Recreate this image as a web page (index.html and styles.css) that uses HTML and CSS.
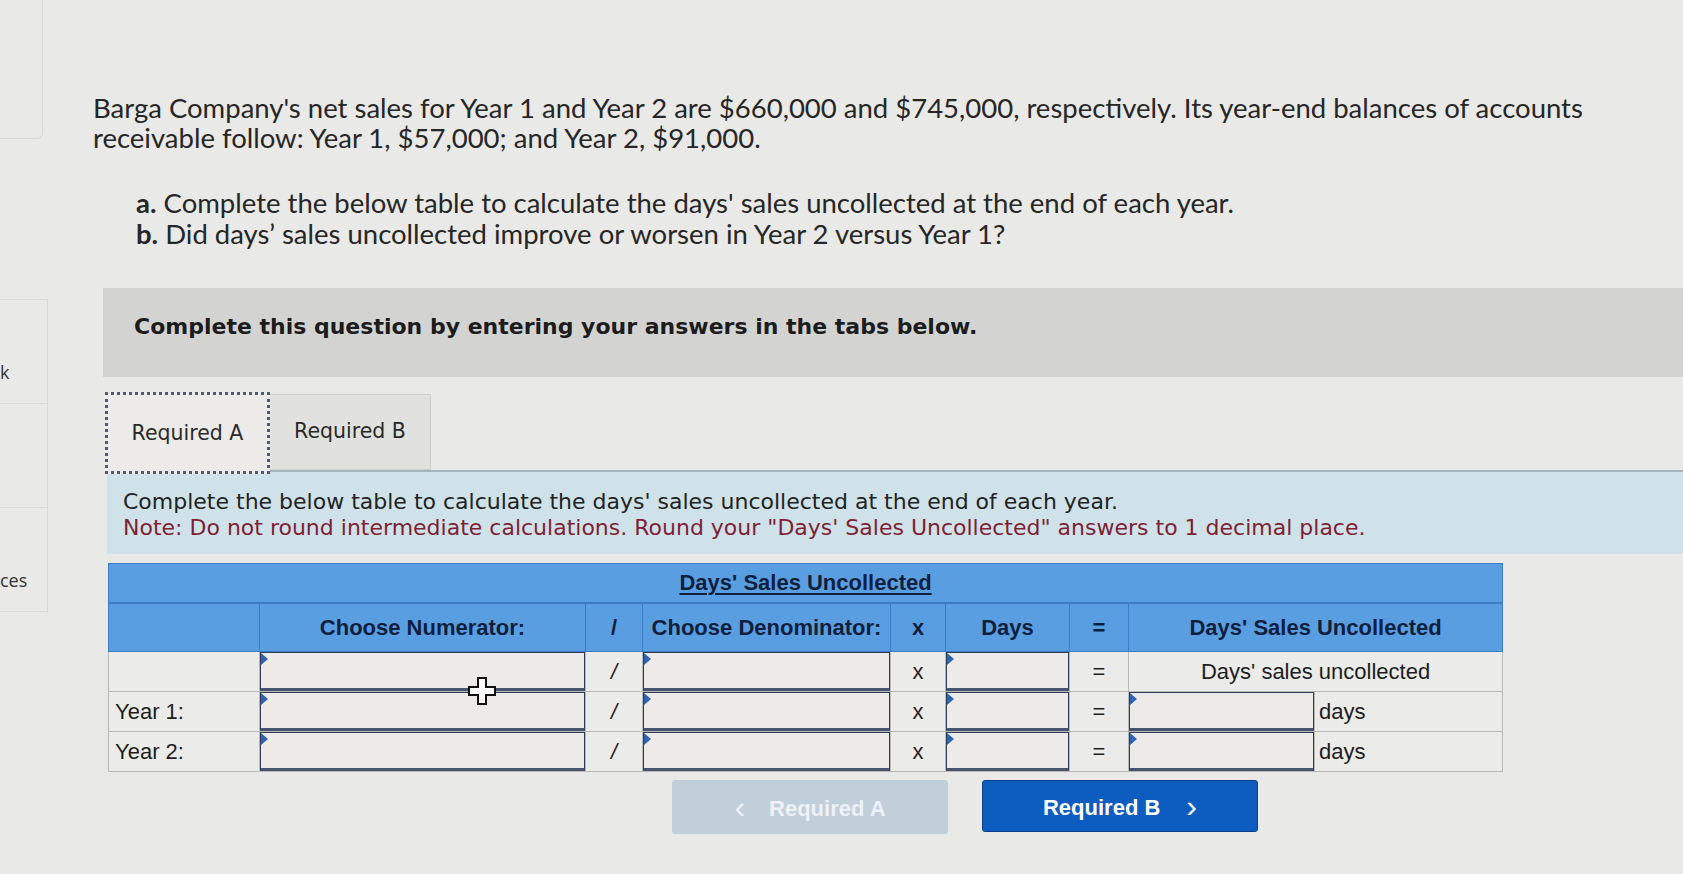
FILE: index.html
```html
<!DOCTYPE html>
<html lang="en">
<head>
    <meta charset="UTF-8" />
    <meta name="viewport" content="width=device-width, initial-scale=1.0"/>
    <title>Days' Sales Uncollected</title>
    <link rel="stylesheet" href="styles.css">
</head>
<body>

<div class="page">
    <aside class="sidebar">
        <div class="side-top"></div>
        <div class="side-stack">
            <div class="side-item"><span>k</span></div>
            <div class="side-item"></div>
            <div class="side-item"><span>ces</span></div>
        </div>
    </aside>

    <main class="main">
        <p class="question">Barga Company's net sales for Year 1 and Year 2 are $660,000 and $745,000, respectively. Its year-end balances of accounts receivable follow: Year 1, $57,000; and Year 2, $91,000.</p>

        <ul class="parts">
            <li><b>a.</b> Complete the below table to calculate the days' sales uncollected at the end of each year.</li>
            <li><b>b.</b> Did days’ sales uncollected improve or worsen in Year 2 versus Year 1?</li>
        </ul>

        <div class="banner">Complete this question by entering your answers in the tabs below.</div>

        <div class="tabs">
            <div class="tab active">Required A</div>
            <div class="tab">Required B</div>
        </div>

        <div class="instructions">
            <p>Complete the below table to calculate the days' sales uncollected at the end of each year.</p>
            <p class="note">Note: Do not round intermediate calculations. Round your "Days' Sales Uncollected" answers to 1 decimal place.</p>
        </div>

        <div class="table-wrap">
            <table class="dsu">
                <colgroup>
                    <col style="width:151px">
                    <col style="width:326px">
                    <col style="width:57px">
                    <col style="width:248px">
                    <col style="width:55px">
                    <col style="width:124px">
                    <col style="width:59px">
                    <col style="width:186px">
                    <col style="width:188px">
                </colgroup>
                <tr class="head-top">
                    <th colspan="9"><u>Days' Sales Uncollected</u></th>
                </tr>
                <tr class="head">
                    <th></th>
                    <th>Choose Numerator:</th>
                    <th>/</th>
                    <th>Choose Denominator:</th>
                    <th>x</th>
                    <th>Days</th>
                    <th>=</th>
                    <th colspan="2">Days' Sales Uncollected</th>
                </tr>
                <tr>
                    <td class="label"></td>
                    <td><div class="inp"></div></td>
                    <td class="op slash">/</td>
                    <td><div class="inp"></div></td>
                    <td class="op">x</td>
                    <td><div class="inp"></div></td>
                    <td class="op">=</td>
                    <td colspan="2" class="result-label">Days' sales uncollected</td>
                </tr>
                <tr>
                    <td class="label">Year 1:</td>
                    <td><div class="inp"></div></td>
                    <td class="op slash">/</td>
                    <td><div class="inp"></div></td>
                    <td class="op">x</td>
                    <td><div class="inp"></div></td>
                    <td class="op">=</td>
                    <td><div class="inp"></div></td>
                    <td class="unit">days</td>
                </tr>
                <tr>
                    <td class="label">Year 2:</td>
                    <td><div class="inp"></div></td>
                    <td class="op slash">/</td>
                    <td><div class="inp"></div></td>
                    <td class="op">x</td>
                    <td><div class="inp"></div></td>
                    <td class="op">=</td>
                    <td><div class="inp"></div></td>
                    <td class="unit">days</td>
                </tr>
            </table>

            <svg class="cursor" width="32" height="32" viewBox="0 0 32 32">
                <path d="M12 3h8v9h9v8h-9v9h-8v-9H3v-8h9z" fill="#fff" stroke="#111" stroke-width="2"/>
            </svg>
        </div>

        <div class="nav">
            <button class="nav-btn disabled"><span class="chev prev">&lsaquo;</span>Required A</button>
            <button class="nav-btn primary">Required B<span class="chev next">&rsaquo;</span></button>
        </div>
    </main>
</div>

</body>
</html>
```

FILE: styles.css
```css
body {
    margin: 0;
    background-color: #e9e9e7;
    color: #2a2a2a;
    font-family: Lato, "Open Sans", sans-serif;
}

.page {
    display: flex;
    min-height: 874px;
}

/* left rail, mostly cut off */
.sidebar {
    width: 48px;
    flex-shrink: 0;
}

.side-top {
    width: 42px;
    height: 138px;
    border: 1px solid #d9d9d6;
    border-left: none;
    border-top: none;
    border-radius: 0 0 6px 0;
}

.side-stack {
    margin-top: 160px;
    width: 47px;
    border: 1px solid #d9d9d6;
    border-left: none;
}

.side-item {
    height: 103px;
    border-bottom: 1px solid #d9d9d6;
    font-family: "Open Sans", sans-serif;
    font-size: 18px;
    color: #333;
    overflow: hidden;
}

.side-item:last-child {
    border-bottom: none;
}

.side-item span {
    display: block;
    padding-top: 60px;
}

.main {
    flex: 1;
    padding-top: 93px;
}

.question {
    margin: 0 0 0 45px;
    max-width: 1560px;
    font-size: 27.5px;
    line-height: 30px;
    color: #262626;
}

.parts {
    list-style: none;
    margin: 34px 0 0 88px;
    padding: 0;
    font-size: 27.5px;
    line-height: 31px;
    color: #262626;
}

.parts b {
    font-weight: 700;
}

.banner {
    margin: 39px 0 0 55px;
    height: 89px;
    box-sizing: border-box;
    padding: 26px 0 0 31px;
    background-color: #d3d4d2;
    font-family: "DejaVu Sans", sans-serif;
    font-weight: bold;
    font-size: 22px;
    line-height: 26px;
    color: #1c1c1c;
}

.tabs {
    display: flex;
    margin: 15px 0 0 57px;
    height: 78px;
    align-items: flex-start;
}

.tab {
    font-family: "DejaVu Sans", sans-serif;
    font-size: 20.5px;
    color: #2a2a2a;
    box-sizing: border-box;
    text-align: center;
}

.tab.active {
    width: 165px;
    height: 82px;
    line-height: 76px;
    border: 3px dotted #4d5a70;
    background-color: #ecebe9;
    position: relative;
    z-index: 1;
}

.tab:not(.active) {
    width: 161px;
    height: 76px;
    margin-top: 2px;
    line-height: 72px;
    background-color: #e1e1df;
    border: 1px solid #cfcfcc;
    border-left: none;
}

.instructions {
    margin-left: 59px;
    height: 84px;
    box-sizing: border-box;
    padding: 17px 0 0 16px;
    background-color: #cfe2ea;
    border-top: 2px solid #a9b5ba;
    font-family: "DejaVu Sans", sans-serif;
    font-size: 22px;
    line-height: 26px;
    color: #222;
}

.instructions p {
    margin: 0;
}

.instructions .note {
    color: #7e1f33;
}

.table-wrap {
    position: relative;
    margin: 9px 0 0 60px;
    width: 1394px;
}

.dsu {
    width: 1394px;
    border-collapse: collapse;
    table-layout: fixed;
    font-family: "Liberation Sans", Arial, sans-serif;
    font-size: 22px;
    color: #1d1d1d;
}

.dsu th {
    background-color: #5a9ee2;
    color: #0f1f3d;
    font-weight: bold;
    border: 1px solid #3d7cc4;
    padding: 0;
}

.head-top th {
    height: 38px;
    border-bottom: 2px solid #3d7cc4;
}

.head-top u {
    text-decoration-thickness: 2px;
    text-underline-offset: 3px;
}

.head th {
    height: 47px;
}

.dsu td {
    height: 39px;
    padding: 0;
    border: 1px solid #b8b8b6;
    background-color: #ebebe9;
}

.dsu td.label {
    padding-left: 6px;
}

.dsu td.op {
    text-align: center;
}

.dsu td.slash {
    font-style: italic;
}

.dsu td.result-label {
    text-align: center;
}

.dsu td.unit {
    padding-left: 4px;
}

.inp {
    position: relative;
    box-sizing: border-box;
    height: 39px;
    border: 1px solid #2f3b57;
    border-bottom: 3px solid #46546f;
    background-color: #ecebe9;
}

.inp::before {
    content: "";
    position: absolute;
    top: 0;
    left: 0;
    border-left: 7px solid #2f62b0;
    border-top: 6px solid transparent;
    border-bottom: 6px solid transparent;
}

.cursor {
    position: absolute;
    left: 358px;
    top: 112px;
}

.nav {
    display: flex;
    gap: 34px;
    margin: 8px 0 0 624px;
}

.nav-btn {
    width: 276px;
    height: 54px;
    border: none;
    border-radius: 3px;
    font-family: "Liberation Sans", Arial, sans-serif;
    font-weight: bold;
    font-size: 22px;
    color: #fff;
    cursor: pointer;
}

.nav-btn.disabled {
    background-color: #c1cfdb;
    color: #eef2f6;
}

.nav-btn.primary {
    background-color: #0d5cc0;
    border: 1px solid #0a3f8c;
    height: 52px;
}

.chev {
    font-size: 32px;
    font-weight: normal;
    vertical-align: -2px;
}

.chev.prev {
    margin-right: 24px;
}

.chev.next {
    margin-left: 26px;
}
```
